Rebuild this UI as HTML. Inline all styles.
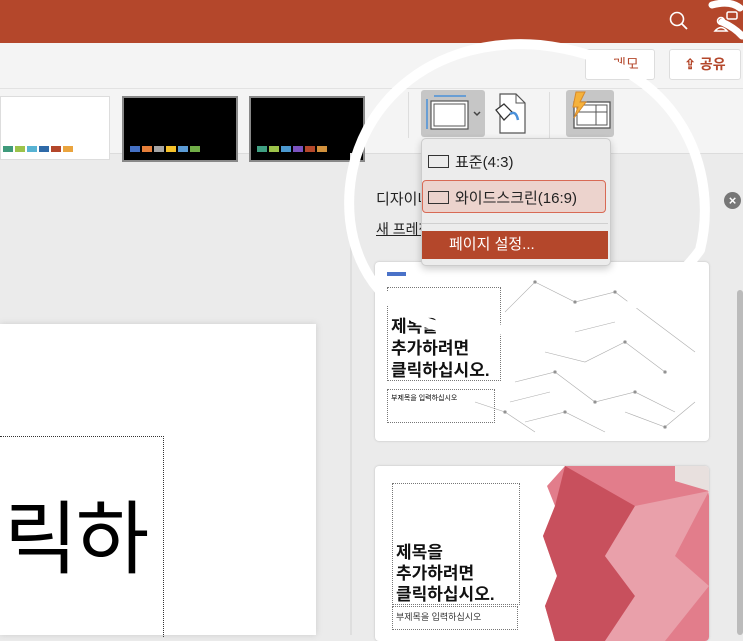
<!DOCTYPE html>
<html><head><meta charset="utf-8"><style>
body{margin:0;width:743px;height:635px;overflow:hidden;position:relative;background:#ebebeb;font-family:"Liberation Sans","Noto Sans CJK KR",sans-serif}
.a{position:absolute}
</style></head><body>
<div class="a" style="left:0;top:0;width:743px;height:43px;background:#b4472b"></div>
<div class="a" style="left:0;top:43px;width:743px;height:110px;background:#f4f4f4;border-bottom:1px solid #dcdcdc"></div>
<div class="a" style="left:0;top:88px;width:743px;height:1px;background:#e2e2e2"></div>
<svg class="a" style="left:668px;top:10px" width="22" height="22"><circle cx="9" cy="9" r="6.5" stroke="#fff" stroke-width="1.6" fill="none"/><line x1="14" y1="14" x2="19" y2="19" stroke="#fff" stroke-width="1.8"/></svg>
<svg class="a" style="left:712px;top:8px" width="30" height="26"><circle cx="9" cy="13" r="3.5" stroke="#fff" stroke-width="1.5" fill="none"/><path d="M3 23 Q9 16 15 23Z" stroke="#fff" stroke-width="1.5" fill="none"/><rect x="15" y="4" width="10" height="7" rx="1.5" stroke="#fff" stroke-width="1.5" fill="none"/></svg>
<div class="a" style="left:585px;top:49px;width:68px;height:29px;background:#fff;border:1px solid #ddd;border-radius:3px;font-size:14px;color:#b4472b;line-height:29px;text-align:center">&nbsp;&nbsp;&nbsp;메모</div>
<div class="a" style="left:669px;top:49px;width:70px;height:29px;background:#fff;border:1px solid #ddd;border-radius:3px;font-size:14px;color:#b4472b;line-height:29px;text-align:center;font-weight:bold">⇪ 공유</div>
<div class="a" style="left:0;top:96px;width:108px;height:62px;background:#fff;border:1px solid #ddd"></div>
<div class="a" style="left:3px;top:146px;display:flex;gap:2px"><i style="width:10px;height:6px;background:#3f9a7b"></i><i style="width:10px;height:6px;background:#9cc34a"></i><i style="width:10px;height:6px;background:#58b3d3"></i><i style="width:10px;height:6px;background:#2f6aa8"></i><i style="width:10px;height:6px;background:#b4472b"></i><i style="width:10px;height:6px;background:#eaa43e"></i></div>
<div class="a" style="left:122px;top:96px;width:112px;height:62px;background:#000;border:2px solid #888"></div>
<div class="a" style="left:130px;top:146px;display:flex;gap:2px"><i style="width:10px;height:6px;background:#4470c4"></i><i style="width:10px;height:6px;background:#e67f3a"></i><i style="width:10px;height:6px;background:#a5a5a5"></i><i style="width:10px;height:6px;background:#f5c12a"></i><i style="width:10px;height:6px;background:#5b9bd5"></i><i style="width:10px;height:6px;background:#70ad47"></i></div>
<div class="a" style="left:249px;top:96px;width:112px;height:62px;background:#000;border:2px solid #888"></div>
<div class="a" style="left:257px;top:146px;display:flex;gap:2px"><i style="width:10px;height:6px;background:#3f9f82"></i><i style="width:10px;height:6px;background:#9cc34a"></i><i style="width:10px;height:6px;background:#4b98cf"></i><i style="width:10px;height:6px;background:#7b52bf"></i><i style="width:10px;height:6px;background:#b4472b"></i><i style="width:10px;height:6px;background:#d2913c"></i></div>
<div class="a" style="left:408px;top:92px;width:1px;height:46px;background:#ddd"></div>
<div class="a" style="left:549px;top:92px;width:1px;height:46px;background:#ddd"></div>
<div class="a" style="left:421px;top:90px;width:64px;height:47px;background:#c6c6c6;border-radius:3px"></div>
<svg class="a" style="left:424px;top:94px" width="60" height="40"><line x1="3" y1="5" x2="3" y2="35" stroke="#4a90d9" stroke-width="1.5"/><line x1="10" y1="2" x2="42" y2="2" stroke="#4a90d9" stroke-width="1.5"/><rect x="7" y="7" width="37" height="28" fill="#fff" stroke="#555" stroke-width="1.2"/><rect x="10" y="10" width="31" height="22" fill="#fff" stroke="#555" stroke-width="1"/><path d="M50 18l3 3 3-3" stroke="#444" stroke-width="1.5" fill="none"/></svg>
<svg class="a" style="left:494px;top:92px" width="34" height="44"><path d="M6 2h16l9 9v30H6z" fill="#fff" stroke="#555" stroke-width="1.2"/><path d="M22 2v9h9" fill="none" stroke="#555"/><path d="M2 18l8-6 8 8-8 8z" fill="#fff" stroke="#333" stroke-width="1.3"/><path d="M16 22q6-4 8 6" stroke="#4a90d9" stroke-width="2.5" fill="none"/></svg>
<div class="a" style="left:566px;top:90px;width:48px;height:47px;background:#c6c6c6;border-radius:3px"></div>
<svg class="a" style="left:566px;top:90px" width="48" height="47"><rect x="8" y="12" width="36" height="26" fill="#fff" stroke="#555" stroke-width="1.3"/><rect x="11" y="15" width="30" height="20" fill="none" stroke="#555"/><line x1="30" y1="15" x2="30" y2="35" stroke="#555"/><line x1="11" y1="22" x2="41" y2="22" stroke="#555"/><path d="M10 2h9l-5 10h6l-12 16 4-11h-5z" fill="#f5b23c" stroke="#d88a2a"/></svg>
<div class="a" style="left:350px;top:153px;width:2px;height:482px;background:#dedede"></div>
<div class="a" style="left:376px;top:188px;font-size:15px;color:#222">디자이너</div>
<div class="a" style="left:376px;top:219px;font-size:14px;color:#222;text-decoration:underline">새 프레젠테이션 아이디어 표시 중...</div>
<div class="a" style="left:724px;top:192px;width:17px;height:17px;border-radius:50%;background:#777;color:#fff;font-size:13px;line-height:17px;text-align:center;font-weight:bold">×</div>
<div class="a" style="left:737px;top:290px;width:6px;height:345px;background:#bbb;border-radius:3px"></div>
<div class="a" style="left:375px;top:262px;width:334px;height:179px;background:#fff;border-radius:4px;box-shadow:0 0 2px #bbb;overflow:hidden">
<svg width="334" height="179" style="position:absolute;left:0;top:0"><g fill="#777" stroke="#999" stroke-width=".6" opacity=".8">
<path d="M130 50 L160 20 L200 40 L240 30 L280 60 L320 90 M140 120 L180 110 L220 140 L260 130 L300 150 M150 160 L190 150 L230 170 M170 90 L210 100 L250 80 L290 110 M135 140 L175 130 M200 70 L240 60 M100 140 L130 150 L160 170 M250 150 L290 165 L320 140" fill="none"/>
<circle cx="160" cy="20" r="1.5"/><circle cx="200" cy="40" r="1.5"/><circle cx="240" cy="30" r="1.5"/><circle cx="180" cy="110" r="1.5"/><circle cx="220" cy="140" r="1.5"/><circle cx="260" cy="130" r="1.5"/><circle cx="190" cy="150" r="1.5"/><circle cx="250" cy="80" r="1.5"/><circle cx="290" cy="110" r="1.5"/><circle cx="130" cy="150" r="1.5"/><circle cx="290" cy="165" r="1.5"/></g></svg>
<div class="a" style="left:12px;top:10px;width:19px;height:4px;background:#4a72c8"></div>
<div class="a" style="left:12px;top:25px;width:112px;height:92px;border:1px dotted #777"></div>
<div class="a" style="left:16px;top:54px;font-size:17px;font-weight:bold;line-height:22px;color:#111">제목을<br>추가하려면<br>클릭하십시오.</div>
<div class="a" style="left:12px;top:127px;width:108px;height:34px;border:1px dotted #777;font-size:7px;padding:3px;box-sizing:border-box">부제목을 입력하십시오</div>
</div>
<div class="a" style="left:375px;top:466px;width:334px;height:175px;background:#fff;border-radius:4px;box-shadow:0 0 2px #bbb;overflow:hidden">
<svg width="334" height="175" style="position:absolute;left:0;top:0"><path d="M190 0L330 0 334 30 334 175 180 175 170 140 182 110 168 70 180 40 172 20z" fill="#e27d8b"/><path d="M190 0L260 40 230 90 260 130 230 175 180 175 170 140 182 110 168 70 180 40z" fill="#c8505d"/><path d="M260 40L334 25 300 90 334 120 290 175 230 175 260 130 230 90z" fill="#e9a0aa"/><path d="M300 0L334 0 334 25 300 15z" fill="#e8e0de"/></svg>
<div class="a" style="left:17px;top:17px;width:126px;height:120px;border:1px dotted #777"></div>
<div class="a" style="left:21px;top:76px;font-size:17px;font-weight:bold;line-height:21px;color:#111">제목을<br>추가하려면<br>클릭하십시오.</div>
<div class="a" style="left:17px;top:140px;width:126px;height:24px;border:1px dotted #777;font-size:9px;padding:3px;box-sizing:border-box;color:#333">부제목을 입력하십시오</div>
</div>
<div class="a" style="left:0;top:324px;width:316px;height:311px;background:#fff;box-shadow:0 0 6px #ccc"></div>
<div class="a" style="left:0;top:436px;width:163px;height:200px;border-right:1px dotted #333;border-top:1px dotted #333"></div>
<div class="a" style="left:4px;top:490px;font-size:80px;color:#000;line-height:100px;letter-spacing:-2px">릭하</div>
<div class="a" style="left:421px;top:138px;width:188px;height:126px;background:#ececec;border:1px solid #ccc;border-radius:5px;box-shadow:0 3px 8px rgba(0,0,0,.2)"></div>
<div class="a" style="left:428px;top:151px;font-size:15px;color:#222"><span style="display:inline-block;width:19px;height:11px;border:1px solid #333;vertical-align:-1px;margin-right:6px"></span>표준(4:3)</div>
<div class="a" style="left:422px;top:180px;width:184px;height:33px;background:#ecd3cd;border:1px solid #d86a55;border-radius:4px;box-sizing:border-box"></div>
<div class="a" style="left:428px;top:187px;font-size:15px;color:#222"><span style="display:inline-block;width:19px;height:11px;border:1px solid #333;vertical-align:-1px;margin-right:6px"></span>와이드스크린(16:9)</div>
<div class="a" style="left:422px;top:223px;width:186px;height:1px;background:#d0d0d0"></div>
<div class="a" style="left:422px;top:231px;width:186px;height:28px;background:#b4472b;color:#fff;font-size:15px;line-height:28px;padding-left:27px;box-sizing:border-box">페이지 설정...</div>
<svg class="a" style="left:0;top:0" width="743" height="635"><path d="M700 250 C720 170 680 60 540 45 C420 35 340 120 350 220 C358 290 410 330 470 330 C560 330 650 320 700 250" fill="none" stroke="#fff" stroke-width="10" stroke-linecap="round"/><path d="M712 5 Q730 0 740 8 M722 22 Q735 28 742 36" fill="none" stroke="#fff" stroke-width="7" stroke-linecap="round"/></svg>
</body></html>
